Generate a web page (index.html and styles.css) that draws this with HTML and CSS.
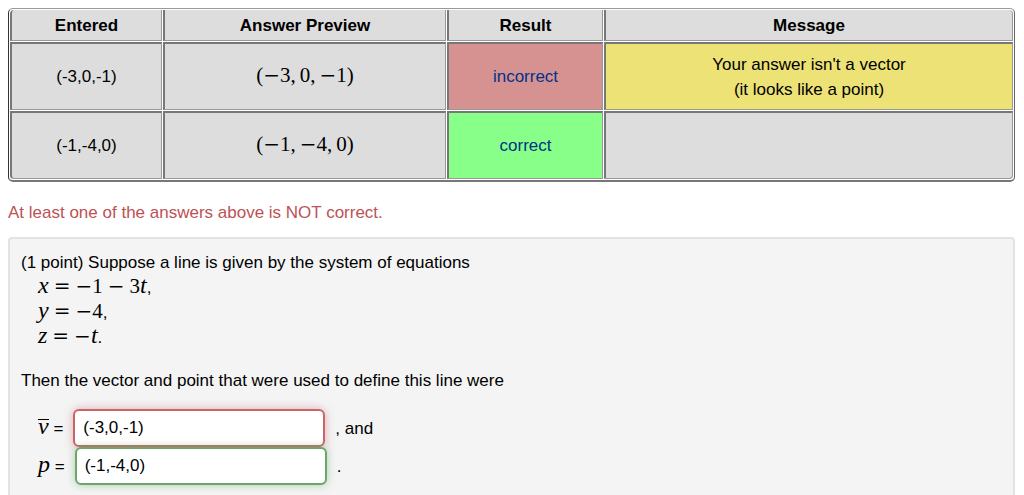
FILE: index.html
```
<!DOCTYPE html>
<html lang="en">
<head>
  <meta charset="UTF-8" />
  <meta name="viewport" content="width=device-width, initial-scale=1.0"/>
  <title>Homework Problem</title>
  <link rel="stylesheet" href="styles.css">
</head>
<body>
  <table class="results">
    <colgroup>
      <col class="col-entered">
      <col class="col-preview">
      <col class="col-result">
      <col>
    </colgroup>
    <thead>
      <tr>
        <th scope="col">Entered</th>
        <th scope="col">Answer Preview</th>
        <th scope="col">Result</th>
        <th scope="col">Message</th>
      </tr>
    </thead>
    <tbody>
      <tr>
        <td>(-3,0,-1)</td>
        <td><span class="math">(<span class="sign">−</span>3<span class="comma">,</span>0<span class="comma">,</span><span class="sign">−</span>1)</span></td>
        <td class="incorrect"><a href="#answer-v">incorrect</a></td>
        <td class="warning">Your answer isn't a vector<br>(it looks like a point)</td>
      </tr>
      <tr>
        <td>(-1,-4,0)</td>
        <td><span class="math">(<span class="sign">−</span>1<span class="comma">,</span><span class="sign">−</span>4<span class="comma">,</span>0)</span></td>
        <td class="correct"><a href="#answer-p">correct</a></td>
        <td></td>
      </tr>
    </tbody>
  </table>

  <p class="summary">At least one of the answers above is NOT correct.</p>

  <form class="problem">
    <p>(1 point) Suppose a line is given by the system of equations</p>
    <div class="equations">
      <div><span class="math"><i>x</i><span class="sign op">=</span><span class="sign">−</span>1<span class="sign op">−</span>3<i>t</i></span>,</div>
      <div><span class="math"><i>y</i><span class="sign op">=</span><span class="sign">−</span>4</span>,</div>
      <div><span class="math"><i>z</i><span class="sign op">=</span><span class="sign">−</span><i>t</i></span>.</div>
    </div>
    <p class="question">Then the vector and point that were used to define this line were</p>
    <div class="answer">
      <label for="answer-v"><span class="math"><i class="bar">v</i></span> =</label>
      <input type="text" id="answer-v" class="input-incorrect" value="(-3,0,-1)">
      <span>, and</span>
    </div>
    <div class="answer">
      <label for="answer-p"><span class="math"><i>p</i></span> =</label>
      <input type="text" id="answer-p" class="input-correct" value="(-1,-4,0)">
      <span>.</span>
    </div>
  </form>
</body>
</html>
```
FILE: styles.css
```
* {
  box-sizing: border-box;
}

body {
  margin: 8px 9px 8px 8px;
  font-family: "Liberation Sans", Arial, sans-serif;
  font-size: 17px;
  line-height: 25px;
  color: #000;
  background-color: #fff;
}

p {
  margin: 0;
}

.results {
  width: 100%;
  table-layout: fixed;
  border-collapse: separate;
  border-spacing: 1px;
  border: 1px solid;
  border-color: #999 #666 #777 #333;
  border-bottom-width: 2px;
  border-radius: 5px;
  background-color: #fff;
  text-align: center;
}

.col-entered {
  width: 152px;
}

.col-preview {
  width: 283px;
}

.col-result {
  width: 156px;
}

.results th,
.results td {
  padding: 0 4px;
  border: 2px solid;
  border-color: #777 #999 #999 #777;
  border-right-width: 1px;
  border-bottom-width: 1px;
  background-color: #ddd;
}

.results th {
  height: 31px;
  border-top: none;
}

.results td {
  height: 68px;
}

.results th:first-child {
  border-top-left-radius: 4px;
}

.results th:last-child {
  border-top-right-radius: 4px;
}

.results tr:last-child td:first-child {
  border-bottom-left-radius: 4px;
}

.results tr:last-child td:last-child {
  border-bottom-right-radius: 4px;
}

.results td.incorrect {
  background-color: #d69191;
}

.results td.correct {
  background-color: #8f8;
}

.results td.warning {
  background-color: #ede275;
}

.results a {
  color: #038;
  text-decoration: none;
}

.math {
  font-family: "Liberation Serif", "Times New Roman", serif;
  font-size: 21px;
  line-height: 20px;
}

.math i {
  font-size: 24px;
}

.sign {
  font-family: "DejaVu Serif", serif;
  font-size: 20px;
}

.comma {
  margin-right: 4px;
}

.op {
  margin: 0 5px;
}

.summary {
  margin: 18px 0 12px;
  color: #bd5255;
}

.problem {
  min-height: 270px;
  padding: 11px;
  border: 2px solid #e3e3e3;
  border-radius: 4px;
  background-color: #f4f4f4;
}

.equations {
  padding-left: 17px;
}

.question {
  margin: 18px 0 16px;
}

.answer {
  display: flex;
  align-items: center;
  padding-left: 17px;
}

.answer label {
  margin-right: 10px;
}

.math .bar {
  display: inline-block;
  border-top: 1px solid #000;
  line-height: 12px;
}

.answer input {
  width: 252px;
  height: 38px;
  margin-right: 10px;
  padding: 0 8px;
  border: 2px solid;
  border-radius: 6px;
  font: inherit;
  color: #000;
  background-color: #fff;
}

.answer .input-incorrect {
  border-color: #c9656a;
  box-shadow: 0 0 8px rgba(201, 101, 106, 0.5);
}

.answer .input-correct {
  border-color: #6aa86a;
  box-shadow: 0 0 8px rgba(106, 168, 106, 0.5);
}
```
